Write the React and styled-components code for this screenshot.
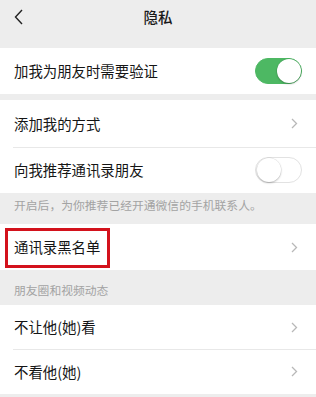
import React from "react";
import styled, { createGlobalStyle } from "styled-components";

const Global = createGlobalStyle`
  html, body { margin: 0; padding: 0; background: #ededed; }
  body { font-family: "Noto Sans CJK SC", "Noto Sans", sans-serif; }
  * { box-sizing: border-box; }
`;

const Page = styled.div`
  width: 316px;
  height: 397px;
  overflow: hidden;
  background: #ededed;
  display: flex;
  flex-direction: column;
`;

const NavBar = styled.div`
  height: 33px;
  flex-shrink: 0;
  display: flex;
  align-items: center;
  justify-content: center;
  position: relative;
`;

const Back = styled.div`
  position: absolute;
  left: 14px;
  top: 9px;
  width: 10px;
  height: 16px;
  display: flex;
`;

const Title = styled.div`
  font-size: 14.5px;
  font-weight: 500;
  color: #1a1a1a;
`;

const Group = styled.div`
  background: #fff;
  margin-top: ${(p) => p.$gap || 0}px;
  flex-shrink: 0;
`;

const Row = styled.div`
  height: ${(p) => p.$h || 46}px;
  display: flex;
  align-items: center;
  justify-content: space-between;
  padding: 0 14px;
  position: relative;
  &:not(:first-child)::before {
    content: "";
    position: absolute;
    top: 0;
    left: 13px;
    right: 0;
    height: 1px;
    background: #e8e8e8;
  }
`;

const Label = styled.span`
  font-size: 14.4px;
  color: #151515;
  line-height: 20px;
`;

const Highlight = styled.span`
  position: absolute;
  left: 5px;
  top: 4px;
  width: 105px;
  height: 40px;
  border: 3px solid #d3121c;
`;

const Toggle = styled.div`
  width: 47px;
  height: 26px;
  border-radius: 13px;
  background: ${(p) => (p.$on ? "#4db863" : "#fff")};
  border: 1px solid ${(p) => (p.$on ? "#4db863" : "#e2e2e2")};
  display: flex;
  justify-content: ${(p) => (p.$on ? "flex-end" : "flex-start")};
  align-items: center;
  padding: 0 0.5px;
`;

const Knob = styled.div`
  width: 24px;
  height: 24px;
  border-radius: 50%;
  background: #fff;
  box-shadow: 0 1px 2px rgba(0, 0, 0, 0.25), 0 0 0 0.5px rgba(0, 0, 0, 0.08);
`;

const Hint = styled.div`
  font-size: 11.8px;
  color: #a3a3a3;
  padding: 2px 14px 10px;
  line-height: 19px;
  flex-shrink: 0;
`;

const SectionTitle = styled.div`
  font-size: 11.8px;
  color: #a3a3a3;
  padding: 10px 14px 6px;
  line-height: 19px;
  flex-shrink: 0;
`;

const Chevron = () => (
  <svg width="7" height="11" viewBox="0 0 7 11" style={{ marginRight: 4 }}>
    <polyline points="1,1 5.5,5.5 1,10" fill="none" stroke="#b8b8b8" strokeWidth="1.3" />
  </svg>
);

export default function App() {
  return (
    <Page>
      <Global />
      <NavBar>
        <Back>
          <svg width="10" height="16" viewBox="0 0 10 16">
            <polyline points="8,1 1.5,8 8,15" fill="none" stroke="#222" strokeWidth="1.4" />
          </svg>
        </Back>
        <Title>隐私</Title>
      </NavBar>
      <Group $gap={15}>
        <Row>
          <Label>加我为朋友时需要验证</Label>
          <Toggle $on>
            <Knob />
          </Toggle>
        </Row>
      </Group>
      <Group $gap={6}>
        <Row $h={47}>
          <Label>添加我的方式</Label>
          <Chevron />
        </Row>
        <Row>
          <Label>向我推荐通讯录朋友</Label>
          <Toggle>
            <Knob />
          </Toggle>
        </Row>
      </Group>
      <Hint>开启后，为你推荐已经开通微信的手机联系人。</Hint>
      <Group>
        <Row>
          <Highlight />
          <Label>通讯录黑名单</Label>
          <Chevron />
        </Row>
      </Group>
      <SectionTitle>朋友圈和视频动态</SectionTitle>
      <Group>
        <Row $h={44}>
          <Label>不让他(她)看</Label>
          <Chevron />
        </Row>
        <Row $h={45}>
          <Label>不看他(她)</Label>
          <Chevron />
        </Row>
      </Group>
    </Page>
  );
}
